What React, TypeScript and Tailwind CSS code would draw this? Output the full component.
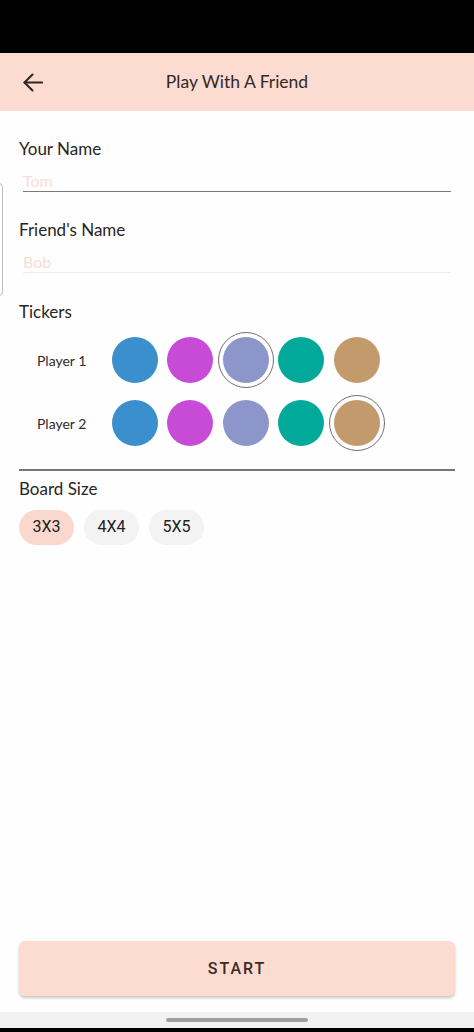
import { useState } from 'react'

const colors = ['#3a8fcc', '#c84bd8', '#8d96cb', '#00a99a', '#c39a6b']
const sizes = ['3X3', '4X4', '5X5']

function TickerRow({ label, selected, onPick }: { label: string; selected: number; onPick: (i: number) => void }) {
  return (
    <div className="flex items-center h-[56px] pl-[18px]">
      <span className="w-[70px] text-[14px] text-[#2f2a28]">{label}</span>
      <div className="flex">
        {colors.map((c, i) => (
          <button
            key={c}
            onClick={() => onPick(i)}
            className="w-[55.5px] h-[56px] flex items-center justify-center"
          >
            <span
              className={`w-[56px] h-[56px] rounded-full flex items-center justify-center border-[1.5px] ${
                i === selected ? 'border-[#707070]' : 'border-transparent'
              }`}
            >
              <span className="w-[46px] h-[46px] rounded-full" style={{ backgroundColor: c }} />
            </span>
          </button>
        ))}
      </div>
    </div>
  )
}

export default function App() {
  const [p1, setP1] = useState(2)
  const [p2, setP2] = useState(4)
  const [board, setBoard] = useState(0)

  return (
    <div className="h-[1032px] w-full flex flex-col bg-[#fefefe] relative overflow-hidden" style={{ fontFamily: 'Lato, "Open Sans", sans-serif' }}>
      {/* status bar */}
      <div className="h-[53px] bg-black shrink-0" />

      {/* header */}
      <div className="h-[58px] bg-[#fcdbd0] grid grid-cols-[60px_1fr_60px] items-center shrink-0">
        <button className="pl-[23px] flex items-center text-[#2f2622]">
          <svg width="20" height="19" viewBox="0 0 20 19" fill="none" stroke="currentColor" strokeWidth="2.1" strokeLinecap="round" strokeLinejoin="round">
            <path d="M19 9.5H1.5" />
            <path d="M9.5 1.5L1.5 9.5L9.5 17.5" />
          </svg>
        </button>
        <h1 className="text-center text-[17.5px] text-[#2f2a28]">Play With A Friend</h1>
        <div />
      </div>

      {/* form */}
      <div className="flex-1 px-[19px] pt-[28px]">
        <label className="block text-[17px] leading-[20px] text-[#2a2523]">Your Name</label>
        <div className="mx-[4px] mt-[12px] leading-[20px] text-[16px] text-[#f6ddd5] border-b-[1.5px] border-[#7a7a7a]">Tom</div>

        <label className="block mt-[28px] text-[17px] leading-[20px] text-[#2a2523]">Friend's Name</label>
        <div className="mx-[4px] mt-[12px] leading-[20px] text-[16px] text-[#f6ddd5] border-b-[1.5px] border-[#f9e9e3]">Bob</div>

        <h2 className="mt-[29px] text-[17px] leading-[20px] text-[#2a2523]">Tickers</h2>
        <div className="mt-[10px]">
          <TickerRow label="Player 1" selected={p1} onPick={setP1} />
          <div className="h-[7px]" />
          <TickerRow label="Player 2" selected={p2} onPick={setP2} />
        </div>

        <div className="mt-[18px] h-[1.5px] bg-[#777777]" />

        <h2 className="mt-[8px] text-[17px] leading-[20px] text-[#2a2523]">Board Size</h2>
        <div className="mt-[11px] flex gap-[10px]">
          {sizes.map((s, i) => (
            <button
              key={s}
              onClick={() => setBoard(i)}
              className={`w-[55px] h-[35px] rounded-full text-[16px] text-[#222] ${i === board ? 'bg-[#fbd8cd]' : 'bg-[#f2f3f2]'}`}
              style={{ fontFamily: 'Roboto, "Liberation Sans", sans-serif' }}
            >
              {s}
            </button>
          ))}
        </div>
      </div>

      {/* start */}
      <div className="px-[19px] shrink-0">
        <button
          className="w-full h-[55px] rounded-[6px] bg-[#fcdbd0] shadow-[0_2px_3px_rgba(0,0,0,0.22)] text-[16px] font-medium tracking-[2px] text-[#3a2a25]"
          style={{ fontFamily: 'Roboto, "Liberation Sans", sans-serif' }}
        >
          START
        </button>
      </div>

      {/* nav bar */}
      <div className="mt-[16px] h-[16px] bg-[#f2f2f2] flex items-center justify-center shrink-0">
        <div className="w-[142px] h-[4px] rounded-full bg-[#a0a0a0]" />
      </div>
      <div className="h-[4px] bg-black shrink-0" />

      {/* left edge overlay */}
      <div className="absolute left-[-7px] top-[183px] w-[10px] h-[113px] rounded-[4px] border border-[#bdbdbd]" />
    </div>
  )
}
